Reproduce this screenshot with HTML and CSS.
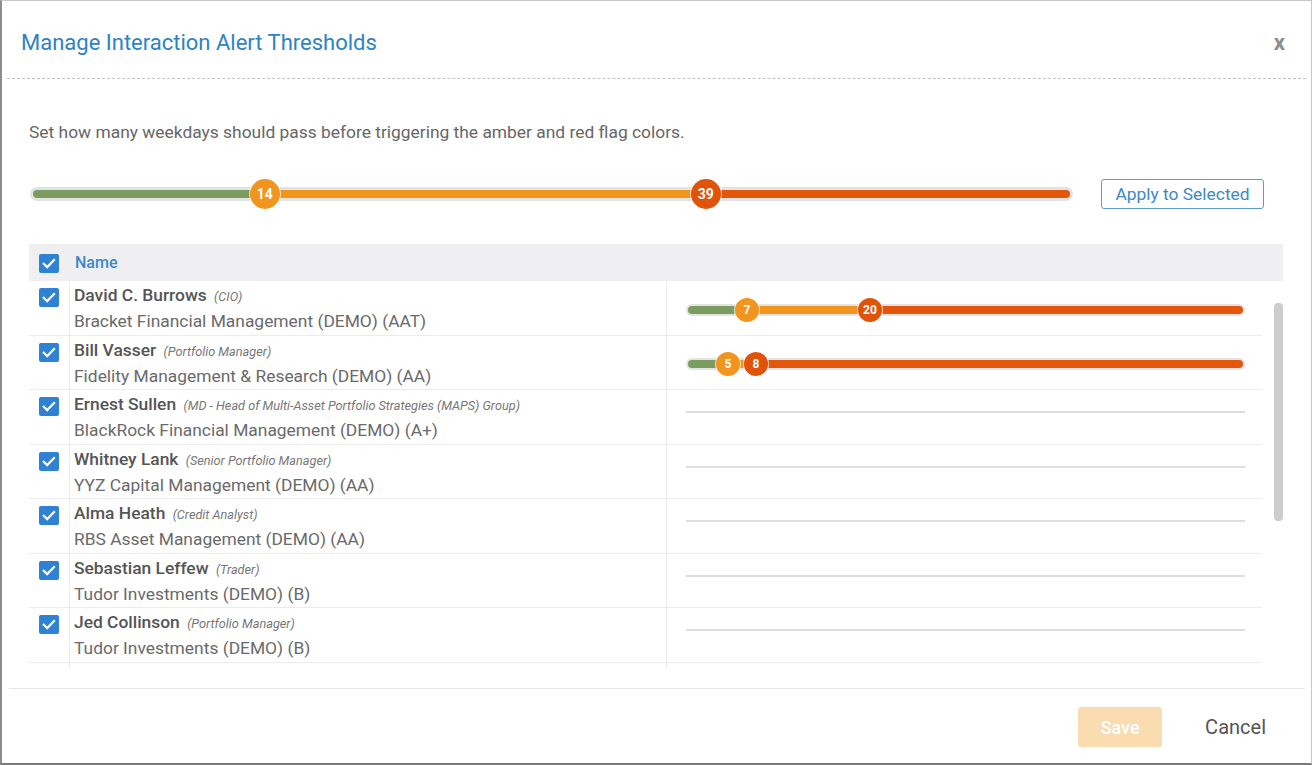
FILE: index.html
```html
<!DOCTYPE html>
<html lang="en">
<head>
<meta charset="utf-8">
<title>Manage Interaction Alert Thresholds</title>
<link rel="stylesheet" href="styles.css">
</head>
<body>
<div class="modal">
  <header class="modal-header">
    <h1 class="title">Manage Interaction Alert Thresholds</h1>
    <span class="close">x</span>
  </header>
  <div class="modal-body">
    <p class="desc">Set how many weekdays should pass before triggering the amber and red flag colors.</p>
    <div class="master">
      <div class="slider big" style="--a:22.5%;--b:64.8%">
        <div class="fill"></div>
        <span class="handle amber" style="left:22.5%">14</span>
        <span class="handle red" style="left:64.8%">39</span>
      </div>
      <button class="apply">Apply to Selected</button>
    </div>

    <div class="table">
      <div class="thead">
        <div class="cb-cell"><span class="cb"><svg viewBox="0 0 20 20"><path d="M4.5 10.2l3.6 3.6 7.2-7.4"/></svg></span></div>
        <div class="th-name">Name</div>
      </div>
      <div class="tbody">
        <div class="rows">
          <div class="row">
            <div class="cb-cell"><span class="cb"><svg viewBox="0 0 20 20"><path d="M4.5 10.2l3.6 3.6 7.2-7.4"/></svg></span></div>
            <div class="name-cell">
              <div class="name">David C. Burrows <span class="role">(CIO)</span></div>
              <div class="company">Bracket Financial Management (DEMO) (AAT)</div>
            </div>
            <div class="slider-cell">
              <div class="slider small" style="--a:10.9%;--b:32.9%">
                <div class="fill"></div>
                <span class="handle amber" style="left:10.9%">7</span>
                <span class="handle red" style="left:32.9%">20</span>
              </div>
            </div>
          </div>
          <div class="row">
            <div class="cb-cell"><span class="cb"><svg viewBox="0 0 20 20"><path d="M4.5 10.2l3.6 3.6 7.2-7.4"/></svg></span></div>
            <div class="name-cell">
              <div class="name">Bill Vasser <span class="role">(Portfolio Manager)</span></div>
              <div class="company">Fidelity Management &amp; Research (DEMO) (AA)</div>
            </div>
            <div class="slider-cell">
              <div class="slider small" style="--a:7.5%;--b:12.5%">
                <div class="fill"></div>
                <span class="handle amber" style="left:7.5%">5</span>
                <span class="handle red" style="left:12.5%">8</span>
              </div>
            </div>
          </div>
          <div class="row">
            <div class="cb-cell"><span class="cb"><svg viewBox="0 0 20 20"><path d="M4.5 10.2l3.6 3.6 7.2-7.4"/></svg></span></div>
            <div class="name-cell">
              <div class="name">Ernest Sullen <span class="role">(MD - Head of Multi-Asset Portfolio Strategies (MAPS) Group)</span></div>
              <div class="company">BlackRock Financial Management (DEMO) (A+)</div>
            </div>
            <div class="slider-cell"><div class="empty-track"></div></div>
          </div>
          <div class="row">
            <div class="cb-cell"><span class="cb"><svg viewBox="0 0 20 20"><path d="M4.5 10.2l3.6 3.6 7.2-7.4"/></svg></span></div>
            <div class="name-cell">
              <div class="name">Whitney Lank <span class="role">(Senior Portfolio Manager)</span></div>
              <div class="company">YYZ Capital Management (DEMO) (AA)</div>
            </div>
            <div class="slider-cell"><div class="empty-track"></div></div>
          </div>
          <div class="row">
            <div class="cb-cell"><span class="cb"><svg viewBox="0 0 20 20"><path d="M4.5 10.2l3.6 3.6 7.2-7.4"/></svg></span></div>
            <div class="name-cell">
              <div class="name">Alma Heath <span class="role">(Credit Analyst)</span></div>
              <div class="company">RBS Asset Management (DEMO) (AA)</div>
            </div>
            <div class="slider-cell"><div class="empty-track"></div></div>
          </div>
          <div class="row">
            <div class="cb-cell"><span class="cb"><svg viewBox="0 0 20 20"><path d="M4.5 10.2l3.6 3.6 7.2-7.4"/></svg></span></div>
            <div class="name-cell">
              <div class="name">Sebastian Leffew <span class="role">(Trader)</span></div>
              <div class="company">Tudor Investments (DEMO) (B)</div>
            </div>
            <div class="slider-cell"><div class="empty-track"></div></div>
          </div>
          <div class="row">
            <div class="cb-cell"><span class="cb"><svg viewBox="0 0 20 20"><path d="M4.5 10.2l3.6 3.6 7.2-7.4"/></svg></span></div>
            <div class="name-cell">
              <div class="name">Jed Collinson <span class="role">(Portfolio Manager)</span></div>
              <div class="company">Tudor Investments (DEMO) (B)</div>
            </div>
            <div class="slider-cell"><div class="empty-track"></div></div>
          </div>
          <div class="row">
            <div class="cb-cell"></div>
            <div class="name-cell"></div>
            <div class="slider-cell"></div>
          </div>
        </div>
        <div class="scroll"><div class="thumb"></div></div>
      </div>
    </div>
  </div>
  <footer class="modal-footer">
    <button class="save">Save</button>
    <button class="cancel">Cancel</button>
  </footer>
</div>
</body>
</html>
```

FILE: styles.css
```css
* { box-sizing: border-box; }
html, body { margin: 0; padding: 0; }
body {
  font-family: Roboto, "Liberation Sans", sans-serif;
  background: #fff;
  width: 1312px;
  height: 765px;
  overflow: hidden;
}

.modal {
  width: 1312px;
  height: 765px;
  border: 1px solid #c8c8c8;
  border-left: 2px solid #8d8d8d;
  border-bottom: 2px solid #7a7a7a;
  display: flex;
  flex-direction: column;
  background: #fff;
}

.modal-header {
  flex: none;
  height: 78px;
  margin: 0 5px;
  border-bottom: 1px dashed #c2c2c2;
  display: flex;
  align-items: center;
  justify-content: space-between;
  padding: 6px 21px 0 14px;
}
.title {
  margin: 0;
  font-size: 22px;
  font-weight: 400;
  color: #2e83c5;
}
.close {
  font-size: 22px;
  font-weight: 700;
  color: #8e8e8e;
  line-height: 1;
}

.modal-body {
  flex: none;
  padding: 0 28px 0 27px;
}
.desc {
  margin: 43px 0 0;
  font-size: 17.4px;
  line-height: 20px;
  color: #666;
}

.master {
  display: flex;
  align-items: center;
  height: 30px;
  margin-top: 37px;
}

.slider {
  position: relative;
  background: #e3e3e3;
}
.slider .fill {
  height: 100%;
  border-radius: 4px;
  background: linear-gradient(to right, #7b9c60 0 var(--a), #f2951f var(--a) var(--b), #e2570b var(--b));
}
.slider.big {
  width: 1043px;
  margin-left: 1px;
  height: 14px;
  padding: 3px;
  border-radius: 7px;
}
.slider.small {
  width: 100%;
  height: 12px;
  padding: 2px;
  border-radius: 6px;
}
.handle {
  position: absolute;
  top: 50%;
  transform: translate(-50%, -50%);
  border-radius: 50%;
  color: #fff;
  font-weight: 700;
  display: flex;
  align-items: center;
  justify-content: center;
  box-shadow: 0 0 0 1px rgba(255,255,255,0.7);
}
.big .handle { width: 30px; height: 30px; font-size: 14px; }
.small .handle { width: 24px; height: 24px; font-size: 12px; }
.handle.amber { background: #f2951f; }
.handle.red { background: #e0530a; }

.apply {
  margin-left: 28px;
  width: 163px;
  height: 30px;
  border: 1px solid #5f9ccb;
  border-radius: 3px;
  background: #fff;
  color: #3d88c5;
  font-family: Roboto, "Liberation Sans", sans-serif;
  font-size: 17.4px;
  padding: 0;
}

.table { margin-top: 35px; }
.thead {
  height: 37px;
  background: #efeff1;
  display: flex;
  align-items: center;
}
.cb-cell {
  flex: none;
  width: 40px;
  padding-left: 10px;
  display: flex;
}
.thead .cb-cell { padding-top: 1px; }
.th-name {
  padding-left: 6px;
  font-size: 16px;
  font-weight: 500;
  color: #3b88c9;
}
.cb {
  width: 20px;
  height: 19px;
  border-radius: 2px;
  background: #2f82d3;
  display: block;
}
.cb svg { width: 20px; height: 19px; display: block; }
.cb path { fill: none; stroke: #fff; stroke-width: 2.3; stroke-linecap: square; }

.tbody {
  display: flex;
  height: 387px;
  overflow: hidden;
  margin-bottom: 20px;
}
.rows { width: 1233px; flex: none; }
.scroll {
  flex: 1;
  display: flex;
  justify-content: flex-end;
}
.thumb {
  width: 9px;
  height: 218px;
  margin-top: 22px;
  background: #cdcdcd;
  border-radius: 4px;
}

.row {
  display: flex;
  height: 54.5px;
  border-bottom: 1px solid #ececec;
}
.row .cb-cell { padding-top: 7px; }
.name-cell {
  flex: 0 0 597px;
  border-left: 1px solid #ececec;
  padding: 4px 0 0 4px;
}
.name {
  font-size: 17.4px;
  font-weight: 500;
  line-height: 21px;
  color: #555;
  white-space: nowrap;
}
.role {
  margin-left: 3px;
  font-size: 12.7px;
  font-weight: 400;
  font-style: italic;
  color: #777;
}
.company {
  margin-top: 2px;
  font-size: 17.4px;
  line-height: 24px;
  color: #6a6a6a;
  white-space: nowrap;
}
.slider-cell {
  flex: 1;
  border-left: 1px solid #ececec;
  padding: 4px 17px 0 19px;
  display: flex;
  align-items: center;
}
.empty-track {
  align-self: flex-start;
  margin-top: 17px;
  width: 100%;
  height: 2px;
  background: #dedede;
}

.modal-footer {
  flex: 1;
  margin: 0 6px 0 7px;
  border-top: 1px solid #e6e6e6;
  padding: 18px 24px 0 0;
  display: flex;
  justify-content: flex-end;
  align-items: flex-start;
}
.save {
  width: 84px;
  height: 40px;
  border: none;
  border-radius: 3px;
  background: #f9ddb0;
  color: #fff;
  font-family: Roboto, "Liberation Sans", sans-serif;
  font-size: 18px;
  font-weight: 500;
}
.cancel {
  margin-left: 28px;
  height: 40px;
  padding: 0 15px;
  border: none;
  background: transparent;
  color: #555;
  font-family: Roboto, "Liberation Sans", sans-serif;
  font-size: 20px;
}
```
